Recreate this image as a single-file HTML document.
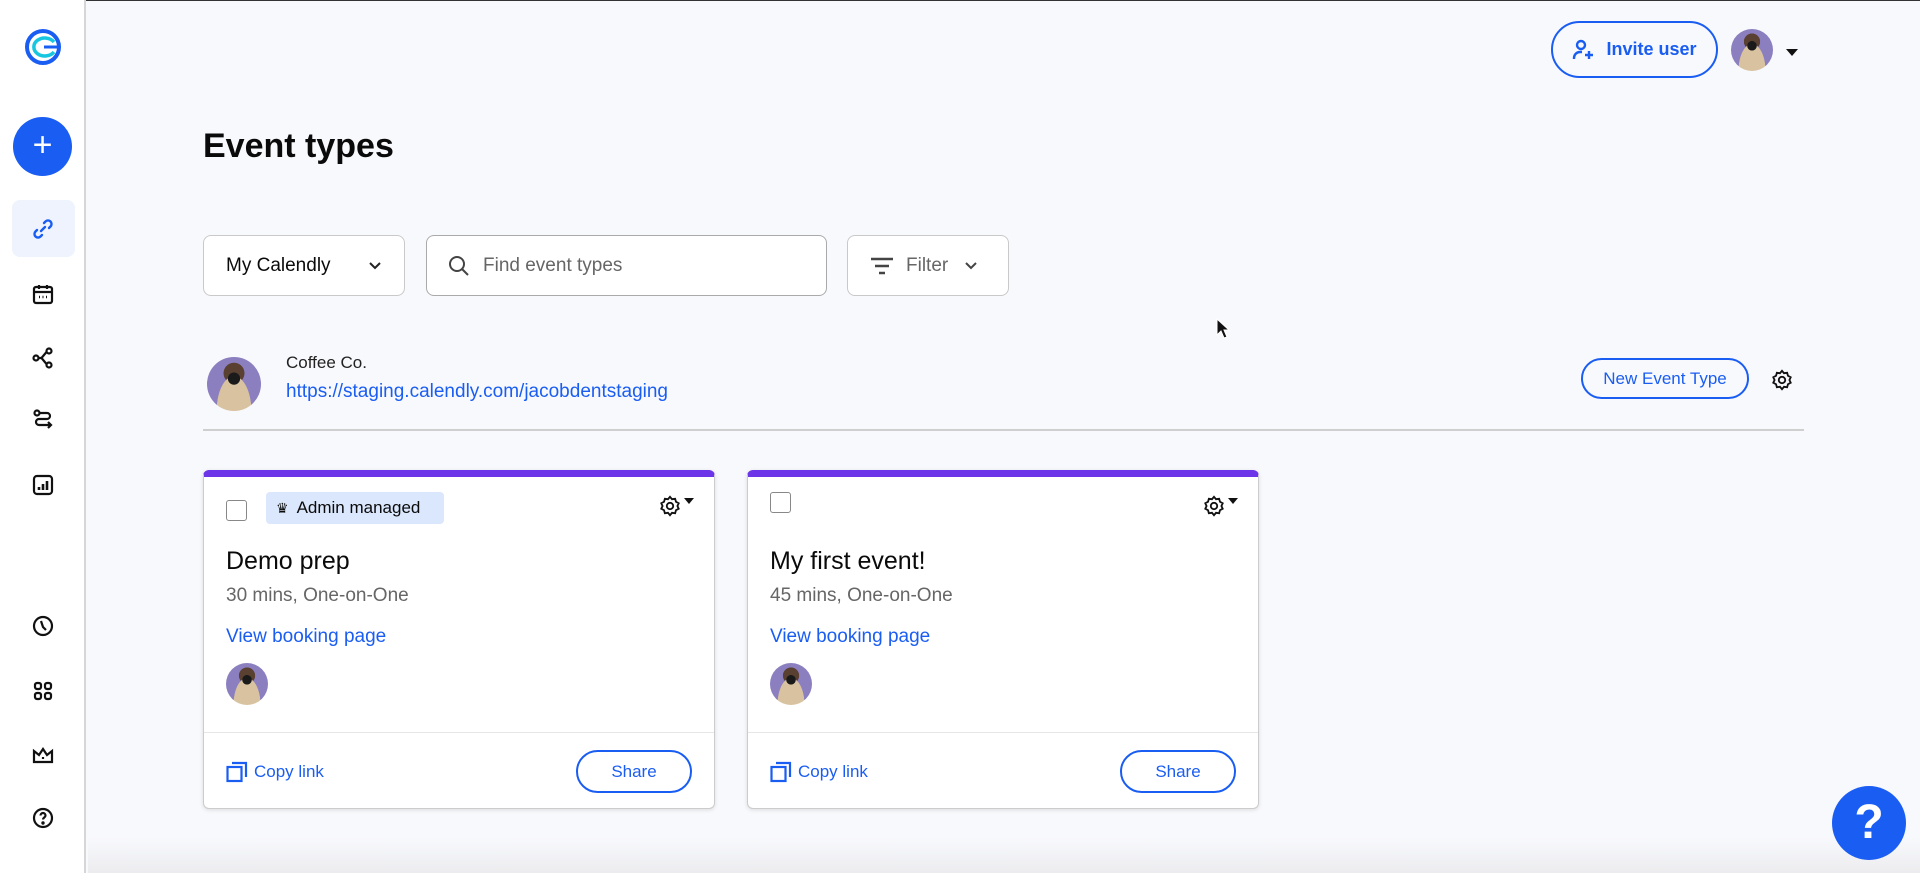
<!DOCTYPE html>
<html><head><meta charset="utf-8"><style>
*{box-sizing:border-box;margin:0;padding:0}
body{width:1920px;height:873px;overflow:hidden;background:#f8f9fc;font-family:"Liberation Sans",sans-serif;position:relative;color:#0a0a0a}
.abs{position:absolute}
.side{left:0;top:0;width:86px;height:873px;background:#fff;border-right:2px solid #d6d6d6}
.top{left:0;top:0;width:1920px;height:1px;background:#333}
.ic{position:absolute;left:31px;width:24px;height:24px}
.av{position:absolute;border-radius:50%;background:radial-gradient(circle at 50% 40%,#1a1a1a 0 14%,transparent 15%),radial-gradient(ellipse at 50% 100%,#d8c2a0 0 45%,transparent 46%),radial-gradient(circle at 50% 30%,#5a4030 0 22%,transparent 23%),#8b7fc0;overflow:hidden}
.box{position:absolute;background:#fff;border:1.5px solid #c9c9c9;border-radius:8px}
.blue{color:#1a5df2}
.btn{position:absolute;border:2px solid #1a5df2;border-radius:30px;color:#1a5df2;display:flex;align-items:center;justify-content:center;background:transparent}
.card{position:absolute;top:470px;width:512px;height:339px;background:#fff;border:1px solid #ccc;border-top:7px solid #6d35e8;border-radius:6px;box-shadow:0 1px 4px rgba(0,0,0,.12)}
.card .cb{position:absolute;left:22px;top:23px;width:21px;height:21px;border:1.5px solid #888;border-radius:3px}
.card .tt{position:absolute;left:22px;top:70px;font-size:25px}
.card .sub{position:absolute;left:22px;top:108px;font-size:19px;color:#666}
.card .vb{position:absolute;left:22px;top:149px;font-size:19px;color:#1a5df2}
.card .foot{position:absolute;left:0;right:0;top:255px;border-top:1px solid #e6e6e6}
.card .cl{position:absolute;left:22px;top:284px;font-size:17px;color:#1a5df2;display:flex;align-items:center;gap:6px}
.card .sh{left:372px;top:273px;width:116px;height:43px;font-size:17px}
.card .gear{position:absolute;right:20px;top:18px}
</style></head><body>
<div class="abs top"></div>
<div class="abs side">
 <svg class="abs" style="left:24px;top:28px" width="38" height="38" viewBox="0 0 38 38"><circle cx="19" cy="19" r="16" fill="none" stroke="#1a5df2" stroke-width="4"/><path d="M30 14a11 9 0 1 0 0 10" fill="none" stroke="#17c6e0" stroke-width="3.5"/><path d="M20 19h15" stroke="#1a5df2" stroke-width="3"/></svg>
 <div class="abs" style="left:13px;top:117px;width:59px;height:59px;border-radius:50%;background:#1a5df2;color:#fff;font-size:34px;line-height:57px;text-align:center">+</div>
 <div class="abs" style="left:12px;top:200px;width:63px;height:57px;border-radius:8px;background:#eef3fd"></div>
 <svg class="ic" style="top:217px" viewBox="0 0 24 24" fill="none" stroke="#1a5df2" stroke-width="2.4" stroke-linecap="round"><path d="M10 14l4-4M13 6l1.5-1.5a3.5 3.5 0 015 5L18 11M11 18l-1.5 1.5a3.5 3.5 0 01-5-5L6 13"/></svg>
 <svg class="ic" style="top:282px" viewBox="0 0 24 24" fill="none" stroke="#111" stroke-width="2.2"><rect x="3" y="5" width="18" height="16" rx="2"/><path d="M3 10h18M8 3v4M16 3v4"/><path d="M8 15h1M11.5 15h1M15 15h1" stroke-width="2.5"/></svg>
 <svg class="ic" style="top:346px" viewBox="0 0 24 24" fill="none" stroke="#111" stroke-width="2.2"><circle cx="5" cy="12" r="2.5"/><circle cx="18" cy="5" r="2.5"/><circle cx="18" cy="19" r="2.5"/><path d="M7.5 12h3l5-6M10.5 12l5 6"/></svg>
 <svg class="ic" style="top:408px" viewBox="0 0 24 24" fill="none" stroke="#111" stroke-width="2.2"><circle cx="6" cy="5" r="2.5"/><path d="M9 5h7a3 3 0 010 6H8a3 3 0 000 6h12M17 14l3 3-3 3"/></svg>
 <svg class="ic" style="top:473px" viewBox="0 0 24 24" fill="none" stroke="#111" stroke-width="2.2"><rect x="3" y="3" width="18" height="18" rx="3"/><path d="M8 17v-3M12 17v-6M16 17v-9" stroke-width="2.6"/></svg>
 <svg class="ic" style="top:614px" viewBox="0 0 24 24" fill="none" stroke="#111" stroke-width="2.2"><circle cx="12" cy="12" r="9"/><path d="M10 7l2 6 3 3"/></svg>
 <svg class="ic" style="top:679px" viewBox="0 0 24 24" fill="none" stroke="#111" stroke-width="2.2"><rect x="4" y="4" width="6" height="6" rx="2"/><rect x="14" y="4" width="6" height="6" rx="2"/><rect x="4" y="14" width="6" height="6" rx="2"/><rect x="14" y="14" width="6" height="6" rx="2"/></svg>
 <svg class="ic" style="top:742px" viewBox="0 0 24 24" fill="none" stroke="#111" stroke-width="2.2"><path d="M3 20V9l5 4 4-6 4 6 5-4v11z"/><path d="M12 15v2"/></svg>
 <svg class="ic" style="top:806px" viewBox="0 0 24 24" fill="none" stroke="#111" stroke-width="2.2"><circle cx="12" cy="12" r="9"/><path d="M9.5 9.5a2.5 2.5 0 115 0c0 2-2.5 2-2.5 4"/><circle cx="12" cy="17" r=".6" fill="#111"/></svg>
</div>

<div class="btn" style="left:1551px;top:21px;width:167px;height:57px;font-size:18px;font-weight:bold;gap:10px"><svg width="24" height="24" viewBox="0 0 24 24" fill="none" stroke="#1a5df2" stroke-width="2.4"><circle cx="9" cy="7" r="4"/><path d="M2 21v-1a6 6 0 016-6h2M17 13v8M13 17h8"/></svg>Invite user</div>
<div class="av" style="left:1731px;top:29px;width:42px;height:42px"></div>
<div class="abs" style="left:1786px;top:49px;border:6px solid transparent;border-top:7px solid #111"></div>

<div class="abs" style="left:203px;top:127px;font-size:34px;font-weight:bold">Event types</div>

<div class="box" style="left:203px;top:235px;width:202px;height:61px;display:flex;align-items:center;padding-left:22px;font-size:19px">My Calendly<svg style="position:absolute;right:22px;top:25px" width="14" height="10" viewBox="0 0 14 10" fill="none" stroke="#222" stroke-width="2"><path d="M2 2l5 5 5-5"/></svg></div>
<div class="box" style="left:426px;top:235px;width:401px;height:61px;border-color:#aaa;display:flex;align-items:center;padding-left:20px;font-size:19px;color:#666"><svg width="24" height="24" viewBox="0 0 24 24" fill="none" stroke="#444" stroke-width="2" style="margin-right:12px"><circle cx="10" cy="10" r="7"/><path d="M15 15l6 6"/></svg>Find event types</div>
<div class="box" style="left:847px;top:235px;width:162px;height:61px;display:flex;align-items:center;padding-left:22px;font-size:19px;color:#666"><svg width="24" height="20" viewBox="0 0 24 20" stroke="#444" stroke-width="2.4"><path d="M1 3h22M5 10h14M9 17h6"/></svg><span style="margin-left:12px">Filter</span><svg style="margin-left:16px" width="14" height="10" viewBox="0 0 14 10" fill="none" stroke="#444" stroke-width="2"><path d="M2 2l5 5 5-5"/></svg></div>

<div class="av" style="left:207px;top:357px;width:54px;height:54px"></div>
<div class="abs" style="left:286px;top:353px;font-size:17px;color:#222">Coffee Co.</div>
<div class="abs blue" style="left:286px;top:381px;font-size:19px">https://staging.calendly.com/jacobdentstaging</div>
<div class="btn" style="left:1581px;top:358px;width:168px;height:41px;font-size:17px">New Event Type</div>
<svg class="abs" style="left:1771px;top:369px" width="22" height="22" viewBox="0 0 24 24" fill="none" stroke="#111" stroke-width="2"><path d="M12 2l2.2 2.6 3.4-.5.9 3.3 3 1.6-1.4 3 1.4 3-3 1.6-.9 3.3-3.4-.5L12 22l-2.2-2.6-3.4.5-.9-3.3-3-1.6 1.4-3-1.4-3 3-1.6.9-3.3 3.4.5z"/><circle cx="12" cy="12" r="3.5"/></svg>
<div class="abs" style="left:203px;top:429px;width:1601px;height:1.5px;background:#cfcfcf"></div>

<div class="card" style="left:203px">
 <div class="cb"></div>
 <div class="abs" style="left:62px;top:15px;width:178px;height:32px;background:#dbe7fc;border-radius:4px;font-size:17px;display:flex;align-items:center;padding-left:10px;gap:8px"><span style="font-size:14px">♛</span>Admin managed</div>
 <div class="gear"><svg width="22" height="22" viewBox="0 0 24 24" fill="none" stroke="#111" stroke-width="2"><path d="M12 2l2.2 2.6 3.4-.5.9 3.3 3 1.6-1.4 3 1.4 3-3 1.6-.9 3.3-3.4-.5L12 22l-2.2-2.6-3.4.5-.9-3.3-3-1.6 1.4-3-1.4-3 3-1.6.9-3.3 3.4.5z"/><circle cx="12" cy="12" r="3.5"/></svg><span style="display:inline-block;margin-left:3px;vertical-align:8px;border:5px solid transparent;border-top:6px solid #111"></span></div>
 <div class="tt">Demo prep</div><div class="sub">30 mins, One-on-One</div><div class="vb">View booking page</div>
 <div class="av" style="left:22px;top:186px;width:42px;height:42px"></div>
 <div class="foot"></div>
 <div class="cl"><svg width="22" height="22" viewBox="0 0 22 22" fill="none" stroke="#1a5df2" stroke-width="2.2"><rect x="1.5" y="6" width="14" height="14"/><path d="M6 2h14v14"/></svg>Copy link</div>
 <div class="btn sh">Share</div>
</div>
<div class="card" style="left:747px">
 <div class="cb" style="top:15px"></div>
 <div class="gear"><svg width="22" height="22" viewBox="0 0 24 24" fill="none" stroke="#111" stroke-width="2"><path d="M12 2l2.2 2.6 3.4-.5.9 3.3 3 1.6-1.4 3 1.4 3-3 1.6-.9 3.3-3.4-.5L12 22l-2.2-2.6-3.4.5-.9-3.3-3-1.6 1.4-3-1.4-3 3-1.6.9-3.3 3.4.5z"/><circle cx="12" cy="12" r="3.5"/></svg><span style="display:inline-block;margin-left:3px;vertical-align:8px;border:5px solid transparent;border-top:6px solid #111"></span></div>
 <div class="tt">My first event!</div><div class="sub">45 mins, One-on-One</div><div class="vb">View booking page</div>
 <div class="av" style="left:22px;top:186px;width:42px;height:42px"></div>
 <div class="foot"></div>
 <div class="cl"><svg width="22" height="22" viewBox="0 0 22 22" fill="none" stroke="#1a5df2" stroke-width="2.2"><rect x="1.5" y="6" width="14" height="14"/><path d="M6 2h14v14"/></svg>Copy link</div>
 <div class="btn sh">Share</div>
</div>

<svg class="abs" style="left:1216px;top:318px" width="14" height="22" viewBox="0 0 14 22"><path d="M1 1v16l4-4 3 7 3-1-3-7h5z" fill="#111" stroke="#fff" stroke-width="1"/></svg>
<div class="abs" style="left:88px;top:838px;width:1832px;height:35px;background:linear-gradient(#f8f9fc,#ececef)"></div>
<div class="abs" style="left:1832px;top:786px;width:74px;height:74px;border-radius:50%;background:#1a5df2;color:#fff;font-size:48px;font-weight:bold;text-align:center;line-height:74px">?</div>
</body></html>
